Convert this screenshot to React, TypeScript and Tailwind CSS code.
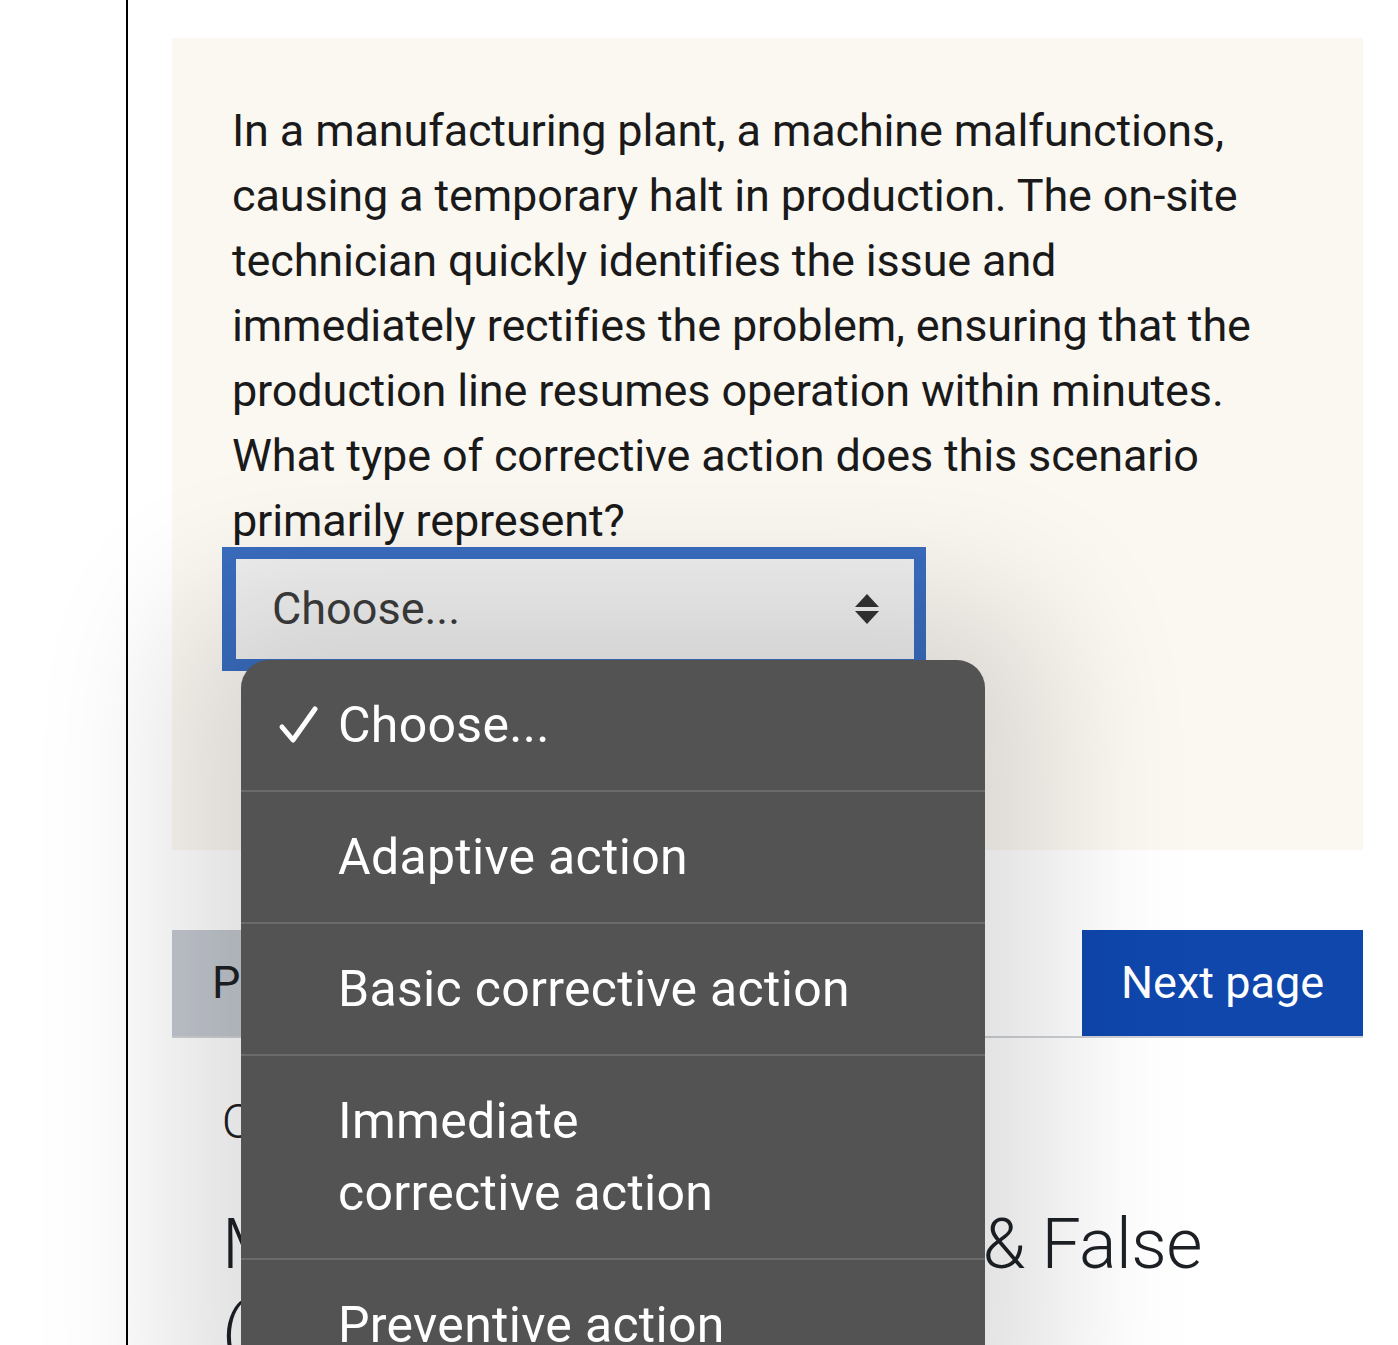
import React from "react";

const options = [
  { label: "Choose...", selected: true },
  { label: "Adaptive action" },
  { label: "Basic corrective action" },
  { label: "Immediate\ncorrective action" },
  { label: "Preventive action" },
];

function SelectArrows() {
  return (
    <svg width="26" height="32" viewBox="0 0 26 32" className="text-[#333]">
      <path d="M13 1 L25 14 H1 Z" fill="currentColor" />
      <path d="M13 31 L25 18 H1 Z" fill="currentColor" />
    </svg>
  );
}

function Check() {
  return (
    <svg width="42" height="40" viewBox="0 0 42 40" className="shrink-0">
      <path
        d="M4 22 L15 35 L37 4"
        fill="none"
        stroke="white"
        strokeWidth="5"
        strokeLinecap="round"
        strokeLinejoin="round"
      />
    </svg>
  );
}

export default function App() {
  return (
    <div
      className="relative w-[1398px] h-[1345px] overflow-hidden bg-white text-[#1d2125]"
      style={{ fontFamily: "Roboto, 'Liberation Sans', sans-serif" }}
    >
      <div className="flex h-full">
        <div className="w-[126px] shrink-0" />
        <div className="w-[2px] bg-black shrink-0" />
        <main className="pl-[44px] pt-[38px] w-[1235px]">
          {/* question card */}
          <section className="bg-[#fbf8f2] h-[812px] px-[60px] pt-[60px]">
            <p className="text-[45px] leading-[65px] text-[#1a1a1a] tracking-[-0.15px] max-w-[1045px]">
              In a manufacturing plant, a machine malfunctions, causing a temporary halt in production. The on-site technician quickly identifies the issue and immediately rectifies the problem, ensuring that the production line resumes operation within minutes. What type of corrective action does this scenario primarily represent?
            </p>
            <div className="ml-[-10px] mt-[-6px] w-[704px] h-[124px] border-[12px] border-l-[14px] border-[#3a6dbf]">
              <div className="h-full bg-[#f0f0f0] flex items-center justify-between pl-[36px] pr-[34px]">
                <span className="text-[45px] text-[#3c3c3c]">Choose...</span>
                <SelectArrows />
              </div>
            </div>
          </section>

          {/* navigation */}
          <div className="mt-[80px] flex justify-between items-stretch border-b-2 border-[#cfd2d6] h-[108px]">
            <button className="bg-[#c3c7cf] px-[40px] text-[45px] text-[#1d2125]">Previous page</button>
            <button className="bg-[#0f47ad] w-[281px] text-[45px] text-white">Next page</button>
          </div>

          <div className="pl-[50px] pt-[56px]">
            <div className="text-[48px] leading-[56px] font-light">Question 8</div>
            <h2 className="mt-[50px] text-[70px] leading-[88px] font-light tracking-[-0.55px] w-[1100px]">
              Multiple Choice and True &amp; False (Questions 8–14)
            </h2>
          </div>
        </main>
      </div>

      {/* native picker overlay */}
      <div className="absolute left-[241px] top-[660px] w-[744px] h-[760px] rounded-[28px] bg-[#535353] shadow-[0_0_140px_70px_rgba(0,0,0,0.13)] overflow-hidden">
        {options.map((o, i) => (
          <div
            key={o.label}
            className={
              "flex items-start text-white text-[50px] leading-[72px] tracking-[0.3px] py-[29px] " +
              (i > 0 ? "border-t-[2px] border-[#6b6b6b]" : "")
            }
          >
            <div className="w-[97px] shrink-0 flex justify-end pr-[18px] pt-[16px]">
              {o.selected ? <Check /> : null}
            </div>
            <div className="whitespace-pre-line">{o.label}</div>
          </div>
        ))}
      </div>
    </div>
  );
}
